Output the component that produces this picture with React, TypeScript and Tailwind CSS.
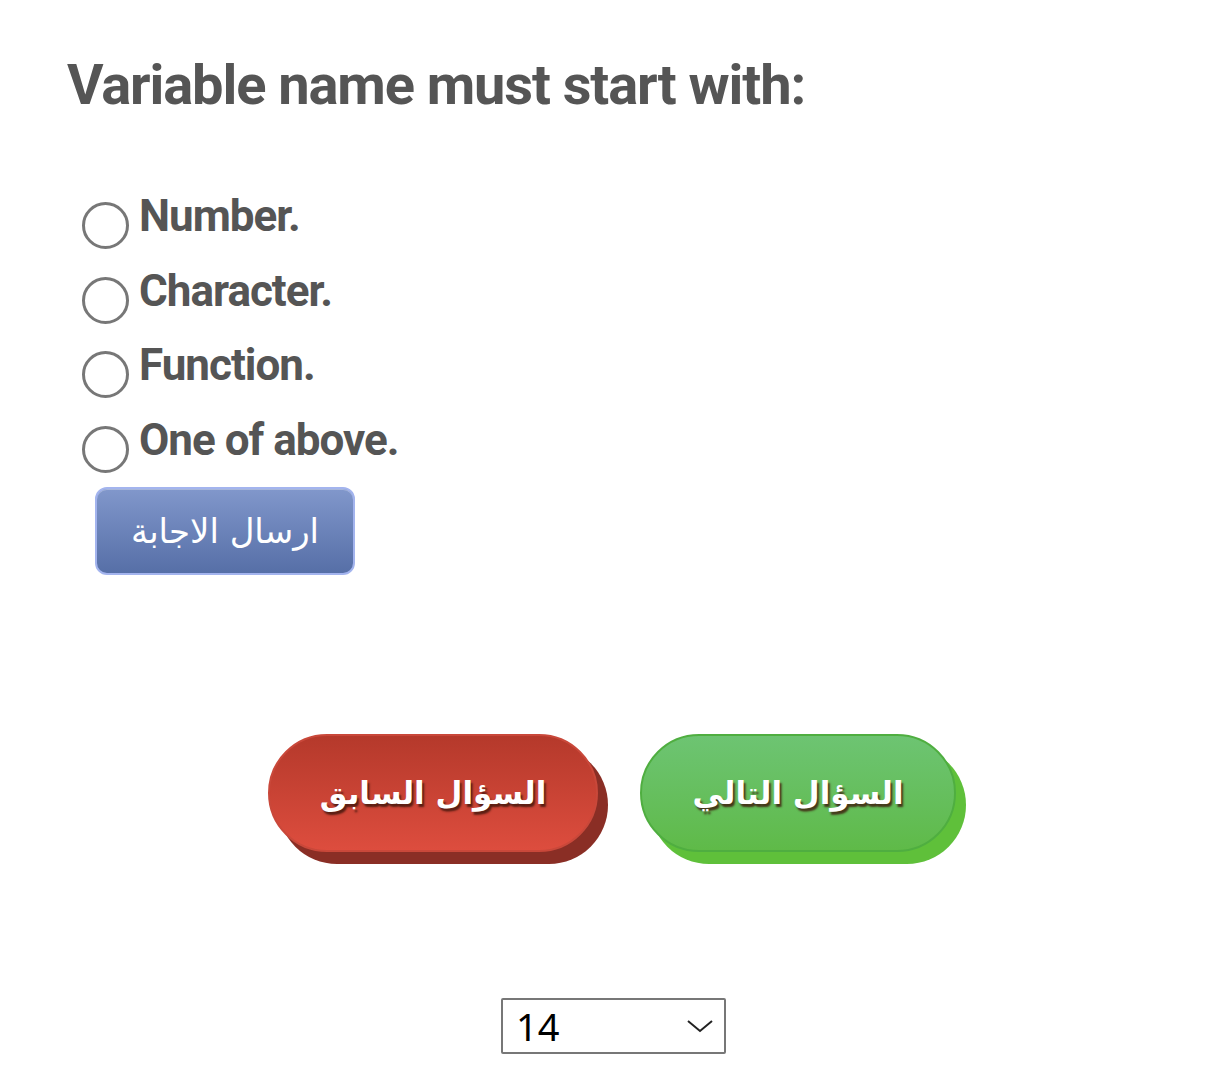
import { FC } from "react"

const options = ["Number.", "Character.", "Function.", "One of above."]

const Radio: FC<{ label: string }> = ({ label }) => (
  <label className="flex items-start h-[74.5px]">
    <span className="mt-[19px] w-[47px] h-[47px] rounded-full border-[3px] border-[#777] bg-white shrink-0" />
    <span className="ml-[10px] mt-[7px] text-[44px] leading-[53px] font-bold text-[#555] tracking-[-1px]">
      {label}
    </span>
  </label>
)

const PillButton: FC<{ text: string; width: string; face: string; shade: string; edge: string }> = ({
  text,
  width,
  face,
  shade,
  edge,
}) => (
  <div className={`relative ${width} h-[130px] pl-[10px] pt-[12px]`}>
    <div className={`h-[118px] w-full rounded-full ${shade}`} />
    <button
      className={`absolute left-0 top-0 right-[10px] h-[118px] rounded-full border-2 ${edge} ${face} flex items-center justify-center text-white text-[31px] font-bold [text-shadow:2px_3px_2px_rgba(60,20,10,0.8)]`}
      dir="rtl"
      style={{ fontFamily: '"DejaVu Sans", sans-serif' }}
    >
      {text}
    </button>
  </div>
)

export default function App() {
  return (
    <div className="min-h-[1080px] w-[1225px] bg-white" style={{ fontFamily: "Roboto, sans-serif" }}>
      <div className="pl-[67px] pt-[52px]">
        <h1 className="text-[56px] leading-[66px] font-bold text-[#555] tracking-[-1.1px]">
          Variable name must start with:
        </h1>

        <div className="mt-[65px] pl-[15px]">
          {options.map((o) => (
            <Radio key={o} label={o} />
          ))}
        </div>

        <button
          className="ml-[28px] mt-[6px] w-[260px] h-[88px] rounded-[12px] border-2 border-[#a3b4ee] bg-gradient-to-b from-[#8197cb] to-[#566fa7] text-white text-[34px] shadow-[inset_0_1px_0_rgba(255,255,255,0.3)]"
          dir="rtl"
          style={{ fontFamily: '"DejaVu Sans", sans-serif' }}
        >
          ارسال الاجابة
        </button>
      </div>

      <div className="mt-[159px] flex justify-center gap-[32px] pl-[9px]">
        <PillButton
          text="السؤال السابق"
          width="w-[340px]"
          face="bg-gradient-to-b from-[#b5392b] to-[#dd4d3e]"
          shade="bg-[#8a2e25]"
          edge="border-[#c9483a]"
        />
        <PillButton
          text="السؤال التالي"
          width="w-[326px]"
          face="bg-gradient-to-b from-[#6dc472] to-[#5fba48]"
          shade="bg-[#5fc03a]"
          edge="border-[#4fae40]"
        />
      </div>

      <div className="mt-[134px] flex justify-center pl-[2px]">
        <div className="w-[225px] h-[56px] border-2 border-[#777] rounded-[2px] flex items-center justify-between pl-[13px] pr-[10px] bg-white">
          <span className="text-[38px] text-black" style={{ fontFamily: '"Segoe UI", "Noto Sans", sans-serif' }}>
            14
          </span>
          <svg width="28" height="16" viewBox="0 0 28 16" fill="none">
            <path d="M2 3 L14 13 L26 3" stroke="#222" strokeWidth="2" />
          </svg>
        </div>
      </div>
    </div>
  )
}
